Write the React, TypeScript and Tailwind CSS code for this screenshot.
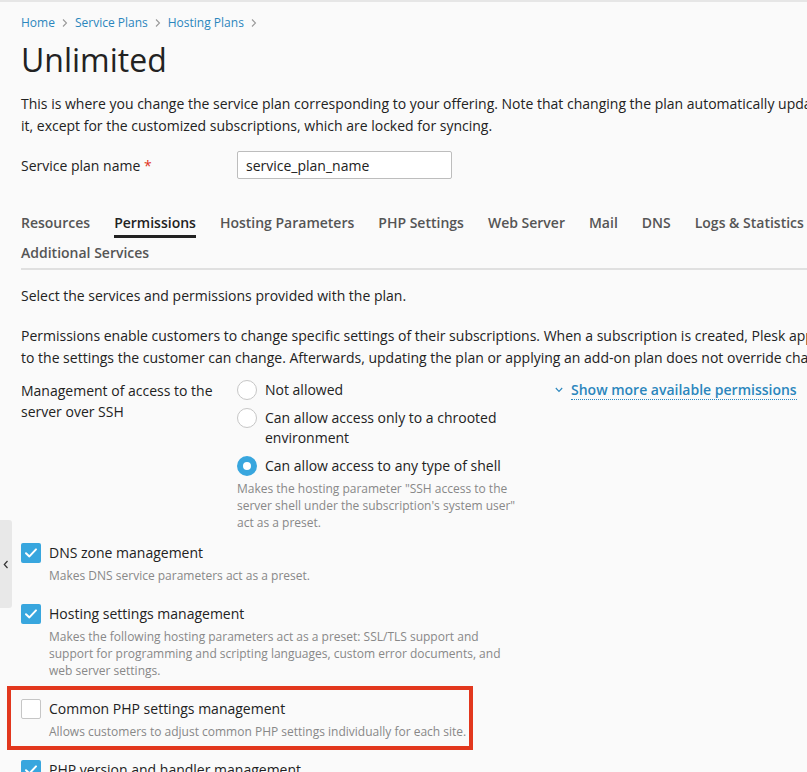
function Crumb({ text }: { text: string }) {
  return (
    <>
      <span className="text-[#2b86bd]">{text}</span>
      <svg width="6" height="8" viewBox="0 0 6 8" className="mx-[7px]">
        <path d="M1 0.5 L4.5 4 L1 7.5" fill="none" stroke="#9a9a9a" strokeWidth="1.1" />
      </svg>
    </>
  );
}

function Radio({ checked }: { checked?: boolean }) {
  return checked ? (
    <span className="block h-[20px] w-[20px] shrink-0 rounded-full border-[6px] border-[#38a6de] bg-white" />
  ) : (
    <span className="block h-[20px] w-[20px] shrink-0 rounded-full border border-[#c6c6c6] bg-white" />
  );
}

function Checkbox({ checked }: { checked?: boolean }) {
  return checked ? (
    <span className="flex h-[20px] w-[20px] shrink-0 items-center justify-center rounded-[2px] bg-[#38a6de]">
      <svg width="14" height="12" viewBox="0 0 14 12">
        <path d="M2 6.2 L5.4 9.4 L12 2.4" fill="none" stroke="white" strokeWidth="2" strokeLinecap="round" strokeLinejoin="round" />
      </svg>
    </span>
  ) : (
    <span className="block h-[20px] w-[20px] shrink-0 rounded-[2px] border border-[#c6c6c6] bg-white" />
  );
}

function CheckRow({
  checked,
  title,
  lines,
}: {
  checked?: boolean;
  title: string;
  lines: string[];
}) {
  return (
    <div className="flex gap-[8px]">
      <Checkbox checked={checked} />
      <div>
        <div className="text-[14px] leading-[20px] whitespace-nowrap">{title}</div>
        {lines.length > 0 && (
          <div className="mt-[4px] text-[12px] leading-[17px] text-[#888] whitespace-nowrap">
            {lines.map((l) => (
              <div key={l}>{l}</div>
            ))}
          </div>
        )}
      </div>
    </div>
  );
}

const tabsRow1 = [
  "Resources",
  "Permissions",
  "Hosting Parameters",
  "PHP Settings",
  "Web Server",
  "Mail",
  "DNS",
  "Logs & Statistics",
];

export default function App() {
  return (
    <div className="relative h-[772px] w-full overflow-hidden border-t-2 border-[#e6e6e6] bg-[#fafafa] font-['Open_Sans',sans-serif] text-[#222]">
      <div className="w-[1100px] pl-[21px] pt-[13px]">
        {/* breadcrumb */}
        <div className="flex h-[16px] items-center text-[12px] leading-[16px]">
          <Crumb text="Home" />
          <Crumb text="Service Plans" />
          <Crumb text="Hosting Plans" />
        </div>

        <h1 className="mt-[9px] text-[32px] leading-[40px] font-normal">Unlimited</h1>

        <div className="mt-[13px] text-[14px] leading-[22px] whitespace-nowrap">
          <div>
            This is where you change the service plan corresponding to your offering. Note that changing the plan
            automatically updates all subscriptions associated with
          </div>
          <div>it, except for the customized subscriptions, which are locked for syncing.</div>
        </div>

        <div className="mt-[14px] flex items-center">
          <div className="w-[216px] text-[14px]">
            Service plan name <span className="text-[#e0341c]">*</span>
          </div>
          <div className="flex h-[28px] w-[215px] items-center rounded-[2px] border border-[#bdbdbd] bg-white px-[8px] text-[14px]">
            service_plan_name
          </div>
        </div>

        {/* tabs */}
        <div className="mt-[28px] border-b-2 border-[#e0e0e0] text-[14px] font-semibold">
          <div className="flex h-[30px] gap-x-[24px]">
            {tabsRow1.map((t) =>
              t === "Permissions" ? (
                <div key={t} className="flex h-[31px] items-center border-b-[3px] border-[#222] pt-[3px] text-[#222]">
                  {t}
                </div>
              ) : (
                <div key={t} className="flex h-[30px] items-center text-[#555]">
                  {t}
                </div>
              )
            )}
          </div>
          <div className="flex h-[31px] items-center text-[#555]">Additional Services</div>
        </div>

        <div className="mt-[15px] text-[14px] leading-[22px]">Select the services and permissions provided with the plan.</div>

        <div className="mt-[18px] text-[14px] leading-[22px] whitespace-nowrap">
          <div>
            Permissions enable customers to change specific settings of their subscriptions. When a subscription is
            created, Plesk applies the plan&apos;s hosting parameters
          </div>
          <div>
            to the settings the customer can change. Afterwards, updating the plan or applying an add-on plan does not
            override changes made by the customer.
          </div>
        </div>

        {/* SSH */}
        <div className="mt-[11px] flex text-[14px]">
          <div className="w-[216px] leading-[21px]">
            <div>Management of access to the</div>
            <div>server over SSH</div>
          </div>
          <div className="w-[318px]">
            <div className="flex gap-[8px] leading-[20px]">
              <Radio />
              <span>Not allowed</span>
            </div>
            <div className="mt-[8px] flex gap-[8px] leading-[20px]">
              <Radio />
              <span>
                Can allow access only to a chrooted
                <br />
                environment
              </span>
            </div>
            <div className="mt-[8px] flex gap-[8px] leading-[20px]">
              <Radio checked />
              <span>Can allow access to any type of shell</span>
            </div>
            <div className="mt-[4px] text-[12px] leading-[17px] text-[#888] whitespace-nowrap">
              <div>Makes the hosting parameter "SSH access to the</div>
              <div>server shell under the subscription's system user"</div>
              <div>act as a preset.</div>
            </div>
          </div>
          <div className="flex h-[20px] items-center gap-[8px] text-[#2b86bd]">
            <svg width="8" height="6" viewBox="0 0 8 6">
              <path d="M0.8 1 L4 4.4 L7.2 1" fill="none" stroke="#2b86bd" strokeWidth="1.1" />
            </svg>
            <span className="border-b border-dotted border-[#2b86bd] leading-[18px] font-semibold">
              Show more available permissions
            </span>
          </div>
        </div>

        <div className="mt-[12px] flex flex-col gap-[20px]">
          <CheckRow checked title="DNS zone management" lines={["Makes DNS service parameters act as a preset."]} />
          <CheckRow
            checked
            title="Hosting settings management"
            lines={[
              "Makes the following hosting parameters act as a preset: SSL/TLS support and",
              "support for programming and scripting languages, custom error documents, and",
              "web server settings.",
            ]}
          />
          <div className="relative">
            <CheckRow
              title="Common PHP settings management"
              lines={["Allows customers to adjust common PHP settings individually for each site."]}
            />
            <div className="absolute top-[-13px] left-[-14px] h-[64px] w-[466px] border-4 border-[#e2371d]" />
          </div>
          <CheckRow checked title="PHP version and handler management" lines={[]} />
        </div>
      </div>

      {/* collapsed side panel handle */}
      <div className="absolute top-[518px] left-0 flex h-[88px] w-[12px] items-center justify-center rounded-r-[3px] bg-[#e8e8e8]">
        <svg width="6" height="9" viewBox="0 0 6 9">
          <path d="M4.5 1 L1.3 4.5 L4.5 8" fill="none" stroke="#333" strokeWidth="1.2" />
        </svg>
      </div>
    </div>
  );
}
